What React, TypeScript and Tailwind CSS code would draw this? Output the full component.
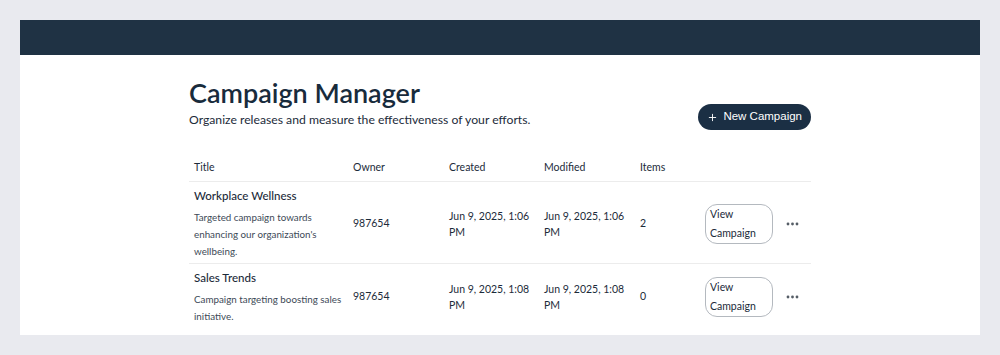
import { Plus } from "lucide-react";

type Campaign = {
  title: string;
  description: string;
  owner: string;
  created: string;
  modified: string;
  items: number;
};

const CAMPAIGNS: Campaign[] = [
  {
    title: "Workplace Wellness",
    description: "Targeted campaign towards enhancing our organization's wellbeing.",
    owner: "987654",
    created: "Jun 9, 2025, 1:06 PM",
    modified: "Jun 9, 2025, 1:06 PM",
    items: 2,
  },
  {
    title: "Sales Trends",
    description: "Campaign targeting boosting sales initiative.",
    owner: "987654",
    created: "Jun 9, 2025, 1:08 PM",
    modified: "Jun 9, 2025, 1:08 PM",
    items: 0,
  },
];

const COLS = "grid grid-cols-[159px_96px_95px_96px_64px_1fr]";

function MoreDots() {
  return (
    <svg width="13" height="4" viewBox="0 0 13 4" className="text-[#555d66]">
      <circle cx="2" cy="2" r="1.4" fill="currentColor" />
      <circle cx="6.5" cy="2" r="1.4" fill="currentColor" />
      <circle cx="11" cy="2" r="1.4" fill="currentColor" />
    </svg>
  );
}

function CampaignRow({ c }: { c: Campaign }) {
  return (
    <div className={`${COLS} items-center border-b border-[#ececec] pt-[5px] pb-[3px] text-[#1c2b3a] last:border-b-0`}>
      <div className="px-[5px]">
        <div className="text-[11.5px] leading-[18px] font-medium">{c.title}</div>
        <p className="mt-[4px] text-[9.8px] leading-[17px] text-[#3d4a57]">{c.description}</p>
      </div>
      <div className="px-[5px] text-[10.5px]">{c.owner}</div>
      <div className="pr-[6px] pl-[5px] text-[10.5px] leading-[16px]">{c.created}</div>
      <div className="pr-[6px] pl-[5px] text-[10.5px] leading-[16px]">{c.modified}</div>
      <div className="px-[5px] text-[10.5px]">{c.items}</div>
      <div className="flex items-center gap-[13px] pl-[6px]">
        <button className="h-[40px] w-[68px] rounded-[12px] border border-[#b4b9bf] bg-white pl-[4px] text-left text-[10.5px] leading-[19px] text-[#1c2b3a]">
          View
          <br />
          Campaign
        </button>
        <MoreDots />
      </div>
    </div>
  );
}

export default function App() {
  return (
    <div className="h-[355px] w-full bg-[#e9eaef] px-[20px] pt-[20px] font-['Lato',sans-serif]">
      <div className="h-[315px] overflow-hidden bg-white">
        <div className="h-[35px] bg-[#1f3244]" />
        <div className="mx-auto w-[622px] pt-[21px]">
          <div className="flex items-end justify-between">
            <div>
              <h1 className="text-[27px] leading-[34px] font-semibold text-[#182b3c]">Campaign Manager</h1>
              <p className="mt-[0px] text-[12.2px] leading-[20px] text-[#1c2b3a]">
                Organize releases and measure the effectiveness of your efforts.
              </p>
            </div>
            <button className="mb-[0px] flex h-[26px] items-center gap-[5px] rounded-full bg-[#1b2f44] pr-[9px] pl-[9px] font-['Liberation_Sans',sans-serif] text-[11.5px] text-white">
              <Plus className="size-[11px]" strokeWidth={2} />
              New Campaign
            </button>
          </div>

          <div className={`${COLS} mt-[29px] border-b border-[#ececec] pb-[6px] text-[10.5px] leading-[16px] text-[#1c2b3a]`}>
            <div className="px-[5px]">Title</div>
            <div className="px-[5px]">Owner</div>
            <div className="px-[5px]">Created</div>
            <div className="px-[5px]">Modified</div>
            <div className="px-[5px]">Items</div>
            <div />
          </div>

          {CAMPAIGNS.map((c) => (
            <CampaignRow key={c.title} c={c} />
          ))}
        </div>
      </div>
    </div>
  );
}
